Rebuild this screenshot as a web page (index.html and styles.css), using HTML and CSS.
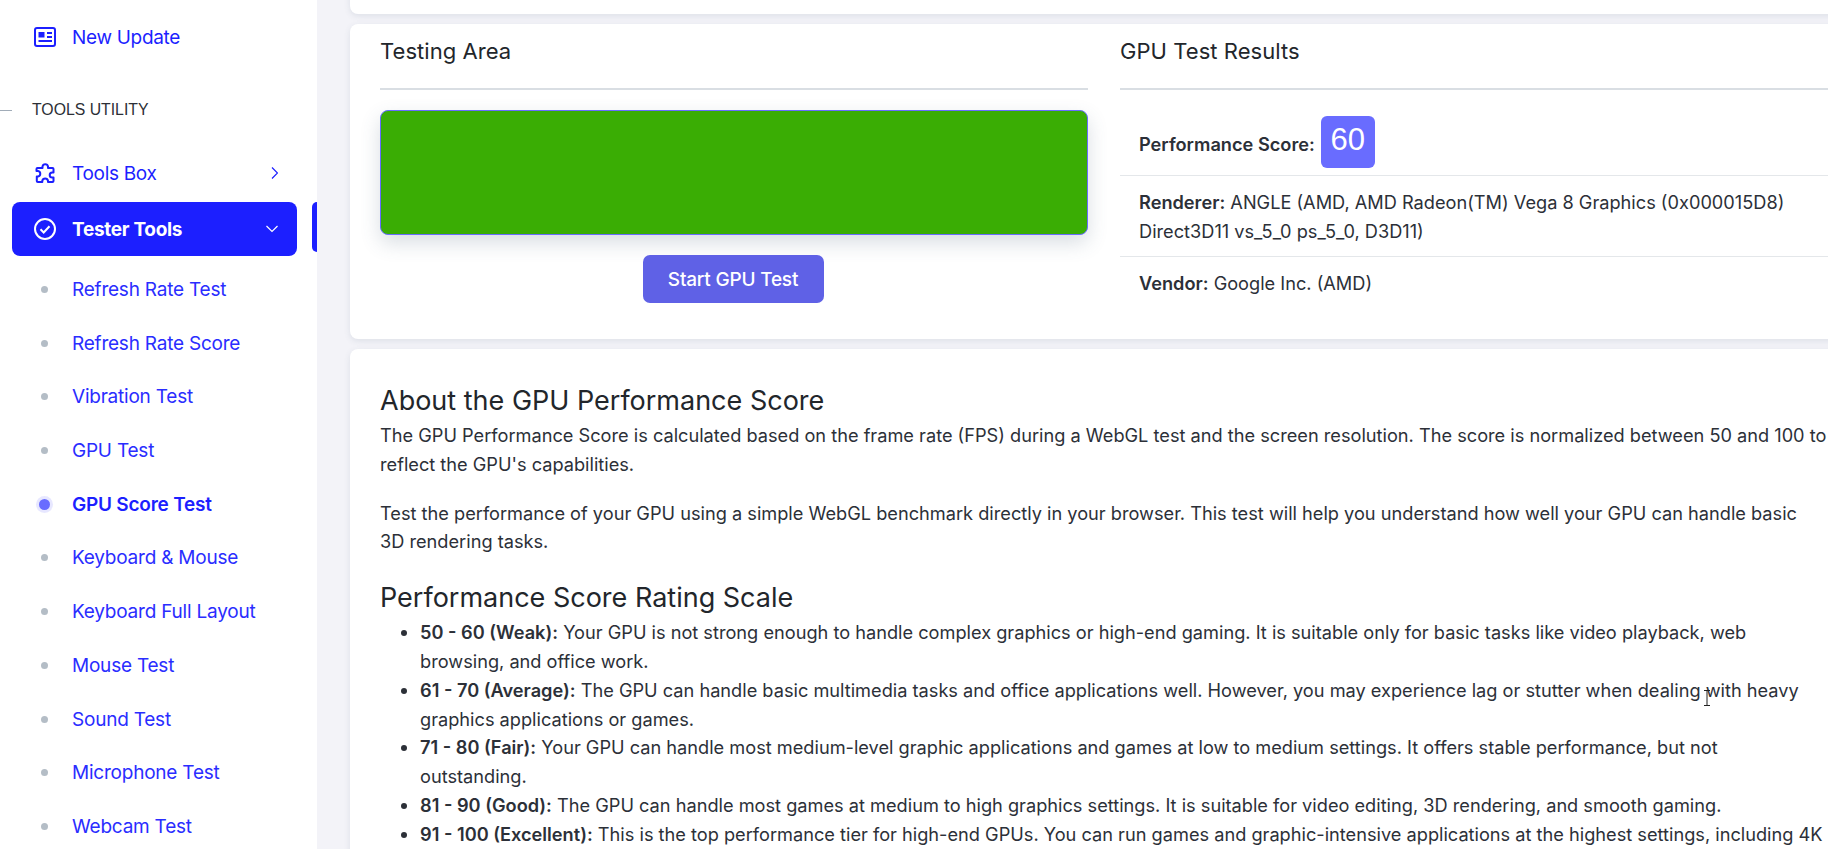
FILE: index.html
```html
<!DOCTYPE html>
<html lang="en">
<head>
    <meta charset="UTF-8">
    <meta name="viewport" content="width=device-width, initial-scale=1.0">
    <title>GPU Score Test</title>
    <link rel="stylesheet" href="styles.css">
</head>

<body>

    <aside class="sidebar">
        <a class="menu-link first" href="#">
            <svg class="menu-icon" viewBox="0 0 24 24"><rect x="2" y="3" width="20" height="18" rx="2" fill="none" stroke="currentColor" stroke-width="2"/><rect x="5.500" y="7" width="6" height="5.500" fill="currentColor"/><path d="M14 8h5M14 12h5M5.500 16h13.500" stroke="currentColor" stroke-width="2" fill="none"/></svg>
            <span>New Update</span>
        </a>

        <div class="menu-header">TOOLS UTILITY</div>

        <a class="menu-link" href="#">
            <svg class="menu-icon" viewBox="0 0 24 24"><path d="M9.500 5.500a2.800 2.800 0 0 1 5.500 0V7h4.500a1 1 0 0 1 1 1v3.600h-1.300a2.500 2.500 0 0 0 0 5h1.300V20a1 1 0 0 1-1 1H15v-1.200a2.900 2.900 0 0 0-5.700 0V21H4.800a1 1 0 0 1-1-1v-4.500H5a2.800 2.800 0 0 0 0-5.500H3.500V8a1 1 0 0 1 1-1h5z" fill="none" stroke="currentColor" stroke-width="2" stroke-linejoin="round"/></svg>
            <span>Tools Box</span>
            <svg class="chevron" viewBox="0 0 12 12"><path d="M6 .500 11.500 6 6 11.500" fill="none" stroke="currentColor" stroke-width="1.200"/></svg>
        </a>

        <div class="active-row">
            <a class="menu-link active" href="#">
                <svg class="menu-icon" viewBox="0 0 24 24"><circle cx="12" cy="12" r="10" fill="none" stroke="currentColor" stroke-width="2"/><path d="M7.500 12.300 10.700 15.500 16.500 9.300" fill="none" stroke="currentColor" stroke-width="2"/></svg>
                <span>Tester Tools</span>
                <svg class="chevron" viewBox="0 0 12 12"><path d="M.500 3 6 8.500 11.500 3" fill="none" stroke="currentColor" stroke-width="1.200"/></svg>
            </a>
            <div class="active-bar"></div>
        </div>

        <ul class="submenu">
            <li><a href="#">Refresh Rate Test</a></li>
            <li><a href="#">Refresh Rate Score</a></li>
            <li><a href="#">Vibration Test</a></li>
            <li><a href="#">GPU Test</a></li>
            <li class="current"><a href="#">GPU Score Test</a></li>
            <li><a href="#">Keyboard &amp; Mouse</a></li>
            <li><a href="#">Keyboard Full Layout</a></li>
            <li><a href="#">Mouse Test</a></li>
            <li><a href="#">Sound Test</a></li>
            <li><a href="#">Microphone Test</a></li>
            <li><a href="#">Webcam Test</a></li>
        </ul>
    </aside>

    <main class="content">
        <div class="card card-cut"></div>

        <section class="card test-card">
            <div class="col-left">
                <h5 class="card-title">Testing Area</h5>
                <hr class="title-line">
                <div class="gpu-canvas"></div>
                <div class="btn-row"><button class="btn">Start GPU Test</button></div>
            </div>
            <div class="col-right">
                <h5 class="card-title">GPU Test Results</h5>
                <hr class="title-line">
                <ul class="results">
                    <li class="score-row"><strong>Performance Score:</strong> <span class="score">60</span></li>
                    <li><strong>Renderer:</strong> ANGLE (AMD, AMD Radeon(TM) Vega 8 Graphics (0x000015D8)<br>Direct3D11 vs_5_0 ps_5_0, D3D11)</li>
                    <li><strong>Vendor:</strong> Google Inc. (AMD)</li>
                </ul>
            </div>
        </section>

        <section class="card about-card">
            <h4>About the GPU Performance Score</h4>
            <p>The GPU Performance Score is calculated based on the frame rate (FPS) during a WebGL test and the screen resolution. The score is normalized between 50 and 100 to<br>reflect the GPU's capabilities.</p>
            <p>Test the performance of your GPU using a simple WebGL benchmark directly in your browser. This test will help you understand how well your GPU can handle basic<br>3D rendering tasks.</p>
            <h4 class="scale-title">Performance Score Rating Scale</h4>
            <ul class="scale">
                <li><strong>50 - 60 (Weak):</strong> Your GPU is not strong enough to handle complex graphics or high-end gaming. It is suitable only for basic tasks like video playback, web<br>browsing, and office work.</li>
                <li><strong>61 - 70 (Average):</strong> The GPU can handle basic multimedia tasks and office applications well. However, you may experience lag or stutter when dealing with heavy<br>graphics applications or games.</li>
                <li><strong>71 - 80 (Fair):</strong> Your GPU can handle most medium-level graphic applications and games at low to medium settings. It offers stable performance, but not<br>outstanding.</li>
                <li><strong>81 - 90 (Good):</strong> The GPU can handle most games at medium to high graphics settings. It is suitable for video editing, 3D rendering, and smooth gaming.</li>
                <li><strong>91 - 100 (Excellent):</strong> This is the top performance tier for high-end GPUs. You can run games and graphic-intensive applications at the highest settings, including 4K</li>
            </ul>
        </section>
    </main>

    <!-- text cursor left in the capture -->
    <svg class="ibeam" viewBox="0 0 8 16"><path d="M1 .500h6M4 .500v15M1 15.500h6" fill="none" stroke="#222" stroke-width="1"/></svg>

</body>
</html>
```

FILE: styles.css
```css
/* Page */
html, body {
    height: 849px;
    overflow: hidden;
}

body {
    margin: 0;
    display: flex;
    align-items: flex-start;
    background-color: #f3f3f8;
    font-family: 'Inter', 'Liberation Sans', sans-serif;
    font-size: 18.200px;
    color: #2c3038;
}

a {
    text-decoration: none;
    color: inherit;
}

/* Sidebar */
.sidebar {
    flex: 0 0 317px;
    height: 849px;
    box-sizing: border-box;
    padding-top: 10px;
    background-color: #fff;
    color: #1c1fff;
    overflow: hidden;
}

.menu-link {
    display: flex;
    align-items: center;
    height: 54px;
    margin-left: 12px;
    width: 285px;
    box-sizing: border-box;
    padding-left: 21px;
    border-radius: 8px;
    font-size: 19px;
    letter-spacing: -0.3px;
}

.menu-icon {
    flex: none;
    width: 24px;
    height: 24px;
    margin-right: 15px;
}

.chevron {
    width: 12px;
    height: 12px;
    margin-left: auto;
    margin-right: 19px;
}

.menu-header {
    position: relative;
    margin: 37px 0 27px;
    padding-left: 32px;
    font-family: 'Liberation Sans', sans-serif;
    font-size: 15.800px;
    line-height: 18px;
    color: #2c2f36;
}

    .menu-header::before {
        content: "";
        position: absolute;
        left: 0;
        top: 9px;
        width: 12px;
        height: 1px;
        background-color: #a1acb8;
    }

.active-row {
    display: flex;
    margin-top: 2px;
}

.menu-link.active {
    background-color: #1c1fff;
    color: #fff;
    font-weight: 700;
}

.active-bar {
    width: 5px;
    height: 50px;
    margin-left: 15px;
    border-radius: 5px 0 0 5px;
    background-color: #1c1fff;
}

.submenu {
    list-style: none;
    margin: 7px 0 0;
    padding: 0;
}

    .submenu li {
        position: relative;
        height: 53.700px;
        line-height: 53.700px;
        padding-left: 72px;
        font-size: 19px;
        letter-spacing: -0.22px;
        color: #2a2dff;
    }

        .submenu li::before {
            content: "";
            position: absolute;
            left: 41px;
            top: 23px;
            width: 7px;
            height: 7px;
            border-radius: 50%;
            background-color: #b4bdc6;
        }

    .submenu .current {
        font-weight: 600;
        color: #1c1fff;
    }

        .submenu .current::before {
            left: 39px;
            top: 21px;
            width: 11px;
            height: 11px;
            background-color: #696cff;
            box-shadow: 0 0 0 3px rgba(105, 108, 255, 0.16);
        }

/* Main column, wider than the window */
.content {
    flex: none;
    width: 1520px;
    margin-left: 33px;
    margin-top: -40px;
}

.card {
    background-color: #fff;
    border-radius: 8px;
    box-shadow: 0 2px 6px rgba(67, 89, 113, 0.12);
    margin-bottom: 10px;
}

.card-cut {
    height: 54px;
}

/* Test card */
.test-card {
    display: flex;
    gap: 32px;
    height: 315px;
    box-sizing: border-box;
    padding: 0 30px;
}

.col-left {
    flex: 0 0 708px;
}

.col-right {
    flex: 1;
}

.card-title {
    margin: 0;
    padding-top: 15px;
    height: 49px;
    font-size: 22px;
    font-weight: 400;
    line-height: 24px;
    letter-spacing: 0.05px;
    color: #22262b;
}

.title-line {
    margin: 0;
    border: none;
    height: 2px;
    background-color: #d9dee3;
}

.gpu-canvas {
    height: 125px;
    box-sizing: border-box;
    margin-top: 20px;
    border: 1px solid #696cff;
    border-radius: 8px;
    background-color: #3aad04;
    box-shadow: 0 8px 20px rgba(67, 89, 113, 0.2);
}

.btn-row {
    display: flex;
    justify-content: center;
    margin-top: 20px;
    padding-right: 2px;
}

.btn {
    width: 181px;
    height: 48px;
    border: none;
    border-radius: 7px;
    background-color: #5f61e6;
    color: #fff;
    font-family: inherit;
    font-size: 19px;
    font-weight: 500;
    letter-spacing: -0.2px;
}

.results {
    list-style: none;
    margin: 0;
    padding: 0;
    line-height: 29px;
}

    .results li {
        padding: 12px 19px 10px;
        border-bottom: 1px solid #e4e7ea;
    }

        .results li:last-child {
            border-bottom: none;
        }

    .results .score-row {
        display: flex;
        align-items: center;
        gap: 6px;
        padding: 26px 19px 7px;
    }

        .results .score-row strong {
            margin-top: 5px;
        }

    .results strong,
    .about-card strong {
        font-weight: 600;
    }

.score {
    display: inline-block;
    width: 54px;
    height: 52px;
    border-radius: 6px;
    background-color: #696cff;
    color: #fff;
    font-family: 'Liberation Sans', sans-serif;
    font-size: 31px;
    line-height: 48px;
    text-align: center;
}

/* About card */
.about-card {
    padding: 36px 30px 30px;
    line-height: 28.800px;
}

    .about-card h4 {
        margin: 0 0 4px;
        font-size: 27px;
        font-weight: 400;
        line-height: 32px;
        color: #22262b;
    }

    .about-card p {
        margin: 0 0 20px;
    }

    .about-card .scale-title {
        margin-top: 26px;
        margin-bottom: 4px;
    }

.scale {
    margin: 0;
    padding-left: 40px;
}

/* Cursor sitting on the list */
.ibeam {
    position: absolute;
    left: 1703px;
    top: 690px;
    width: 8px;
    height: 16px;
}
```
